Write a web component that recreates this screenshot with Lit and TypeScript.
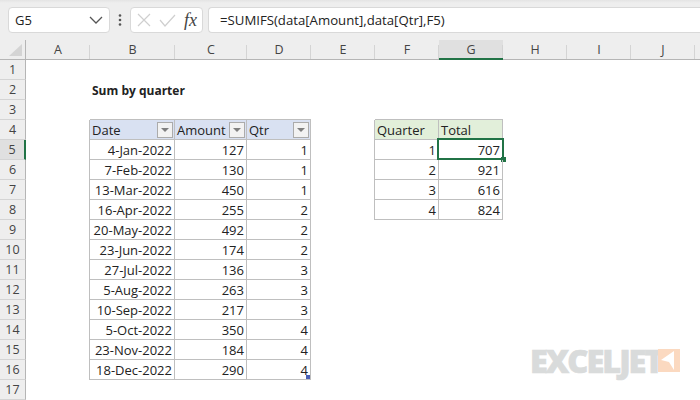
import { LitElement, html, css } from 'lit';
import { customElement } from 'lit/decorators.js';
import { classMap } from 'lit/directives/class-map.js';

const COLS = ['A', 'B', 'C', 'D', 'E', 'F', 'G', 'H', 'I', 'J', ''];

const DATA = [
  ['4-Jan-2022', 127, 1],
  ['7-Feb-2022', 130, 1],
  ['13-Mar-2022', 450, 1],
  ['16-Apr-2022', 255, 2],
  ['20-May-2022', 492, 2],
  ['23-Jun-2022', 174, 2],
  ['27-Jul-2022', 136, 3],
  ['5-Aug-2022', 263, 3],
  ['10-Sep-2022', 217, 3],
  ['5-Oct-2022', 350, 4],
  ['23-Nov-2022', 184, 4],
  ['18-Dec-2022', 290, 4],
];

const TOTALS = [
  [1, 707],
  [2, 921],
  [3, 616],
  [4, 824],
];

type Cell = { text: string | number; head?: 'blue' | 'green'; filter?: boolean };

// cells keyed by "row,col", col 0 = A
const cells = new Map<string, Cell>();
['Date', 'Amount', 'Qtr'].forEach((t, i) => cells.set(`4,${i + 1}`, { text: t, head: 'blue', filter: true }));
DATA.forEach((row, r) => row.forEach((v, i) => cells.set(`${r + 5},${i + 1}`, { text: v })));
['Quarter', 'Total'].forEach((t, i) => cells.set(`4,${i + 5}`, { text: t, head: 'green' }));
TOTALS.forEach((row, r) => row.forEach((v, i) => cells.set(`${r + 5},${i + 5}`, { text: v })));

@customElement('app-root')
export class AppRoot extends LitElement {
  static styles = css`
    :host {
      display: block;
      position: relative;
      width: 700px;
      height: 400px;
      overflow: hidden;
      background: #fff;
      font-family: 'Open Sans', 'Noto Sans', sans-serif;
      font-size: 12.5px;
      color: #222;
    }

    .toolbar {
      height: 40px;
      box-sizing: border-box;
      padding: 7px 0 7px 8px;
      display: flex;
      align-items: stretch;
      background: linear-gradient(#e4e4e4 0, #eeeeee 3px);
    }

    .box {
      background: #fff;
      border: 1px solid #d9d9d9;
      border-radius: 4px;
      box-sizing: border-box;
      display: flex;
      align-items: center;
    }

    .name {
      width: 102px;
      justify-content: space-between;
      padding: 0 6px 0 6px;
      font-size: 13px;
    }

    .dots {
      width: 20px;
      display: flex;
      align-items: center;
      justify-content: center;
    }

    .fx-box {
      width: 73px;
      padding: 0 4px 0 6px;
      justify-content: space-between;
    }

    .fx {
      font-family: 'Liberation Serif', serif;
      font-style: italic;
      font-size: 18px;
      color: #444;
      padding-right: 1px;
    }

    .formula {
      flex: 1;
      margin-left: 5px;
      padding-left: 11px;
      border-right: 0;
      border-radius: 4px 0 0 4px;
      font-size: 13.2px;
    }

    .sheet {
      display: grid;
      grid-template-columns: 26px 64px 85px 72px repeat(7, 64px) 6px;
      grid-template-rows: repeat(18, 20px);
    }

    .corner,
    .col,
    .rownum {
      background: #eeeeee;
      color: #444;
      display: flex;
      align-items: center;
      justify-content: center;
      box-sizing: border-box;
      font-size: 12.5px;
    }

    .corner {
      border-right: 1px solid #b5b5b5;
      border-bottom: 1px solid #b5b5b5;
      padding: 3px 3px 3px 9px;
    }

    .col {
      border-bottom: 1px solid #b5b5b5;
      position: relative;
    }

    .col::after {
      content: '';
      position: absolute;
      right: 0;
      top: 5px;
      bottom: 0;
      width: 1px;
      background: #d4d4d4;
    }

    .col.on {
      background: #e0e0e0;
      border-bottom: 2px solid #217346;
    }

    .rownum {
      border-right: 1px solid #b5b5b5;
      border-bottom: 1px solid #d4d4d4;
    }

    .rownum.on {
      background: #e0e0e0;
      border-right: 2px solid #217346;
    }

    .cell {
      box-sizing: border-box;
      position: relative;
      display: flex;
      align-items: center;
      justify-content: flex-end;
      padding: 0 2px 0 2px;
      white-space: nowrap;
      font-size: 13px;
    }

    .br {
      border-right: 1px solid #bfbfbf;
    }

    .bb {
      border-bottom: 1px solid #bfbfbf;
    }

    .head {
      justify-content: space-between;
    }

    .blue {
      background: #d9e1f2;
    }

    .green {
      background: #e2efda;
    }

    .title {
      justify-content: flex-start;
      font-weight: 700;
      font-size: 12px;
      overflow: visible;
    }

    .filter {
      width: 16px;
      height: 16px;
      margin-right: -1px;
      flex: none;
      box-sizing: border-box;
      border: 1px solid #ababab;
      background: #f2f2f2;
      display: flex;
      align-items: center;
      justify-content: center;
    }

    .filter i {
      width: 0;
      height: 0;
      border-left: 4px solid transparent;
      border-right: 4px solid transparent;
      border-top: 4px solid #7f7f7f;
    }

    .sel {
      position: absolute;
      left: -2px;
      top: -2px;
      right: -2px;
      bottom: -1px;
      border: 2px solid #217346;
    }

    .handle {
      position: absolute;
      right: -4px;
      bottom: -4px;
      width: 5px;
      height: 5px;
      background: #217346;
    }

    .resize {
      position: absolute;
      right: 0;
      bottom: 0;
      width: 4px;
      height: 4px;
      background: #4a5fb5;
    }

    .logo {
      position: absolute;
      left: 530px;
      top: 344px;
      display: flex;
      align-items: flex-start;
      gap: 3px;
    }

    .logo span {
      width: 125px;
      font-family: 'Open Sans', sans-serif;
      font-weight: 800;
      font-size: 32.5px;
      line-height: 34px;
      letter-spacing: -2px;
      -webkit-text-stroke: 0.7px #d9dbdb;
      color: #d9dbdb;
    }

    .logo svg {
      margin-top: 5px;
    }
  `;

  renderCell(r: number, c: number) {
    const cell = cells.get(`${r},${c}`);
    const inTable = (y: number, x: number) => cells.has(`${y},${x}`);
    if (r === 2 && c === 1) {
      return html`<div class="cell title">Sum by quarter</div>`;
    }
    const classes = {
      cell: true,
      br: inTable(r, c) || inTable(r, c + 1),
      bb: inTable(r, c) || inTable(r + 1, c),
      head: !!cell?.head,
      blue: cell?.head === 'blue',
      green: cell?.head === 'green',
    };
    return html`<div class=${classMap(classes)}>
      ${cell?.head ? html`<span>${cell.text}</span>` : cell?.text ?? ''}
      ${cell?.filter ? html`<div class="filter"><i></i></div>` : ''}
      ${r === 5 && c === 6 ? html`<div class="sel"><div class="handle"></div></div>` : ''}
      ${r === 16 && c === 3 ? html`<div class="resize"></div>` : ''}
    </div>`;
  }

  render() {
    const rows = Array.from({ length: 17 }, (_, i) => i + 1);
    return html`
      <div class="toolbar">
        <div class="box name">
          <span>G5</span>
          <svg width="14" height="8" viewBox="0 0 14 8">
            <path d="M1 1l6 6 6-6" fill="none" stroke="#555" stroke-width="1.3" />
          </svg>
        </div>
        <div class="dots">
          <svg width="4" height="12" viewBox="0 0 4 12">
            <circle cx="2" cy="1.5" r="1.3" fill="#555" />
            <circle cx="2" cy="6" r="1.3" fill="#555" />
            <circle cx="2" cy="10.5" r="1.3" fill="#555" />
          </svg>
        </div>
        <div class="box fx-box">
          <svg width="14" height="14" viewBox="0 0 14 14">
            <path d="M1 1l12 12M13 1L1 13" fill="none" stroke="#cfcfcf" stroke-width="1.2" />
          </svg>
          <svg width="17" height="13" viewBox="0 0 17 13">
            <path d="M1 6l5 6L16 1" fill="none" stroke="#cfcfcf" stroke-width="1.2" />
          </svg>
          <span class="fx">fx</span>
        </div>
        <div class="box formula">=SUMIFS(data[Amount],data[Qtr],F5)</div>
      </div>
      <div class="sheet">
        <div class="corner">
          <svg width="13" height="12" viewBox="0 0 13 12"><path d="M13 0v12H0z" fill="#d4d4d4" /></svg>
        </div>
        ${COLS.map((c) => html`<div class="col ${c === 'G' ? 'on' : ''}">${c}</div>`)}
        ${rows.map(
          (r) => html`
            <div class="rownum ${r === 5 ? 'on' : ''}">${r}</div>
            ${COLS.map((_, c) => this.renderCell(r, c))}
          `
        )}
      </div>
      <div class="logo">
        <span>EXCELJET</span>
        <svg width="22" height="23" viewBox="0 0 22 23">
          <rect width="22" height="23" fill="#fbd9c0" />
          <path d="M16 2v19l-5-8-8-2z" fill="#fff" />
        </svg>
      </div>
    `;
  }
}
